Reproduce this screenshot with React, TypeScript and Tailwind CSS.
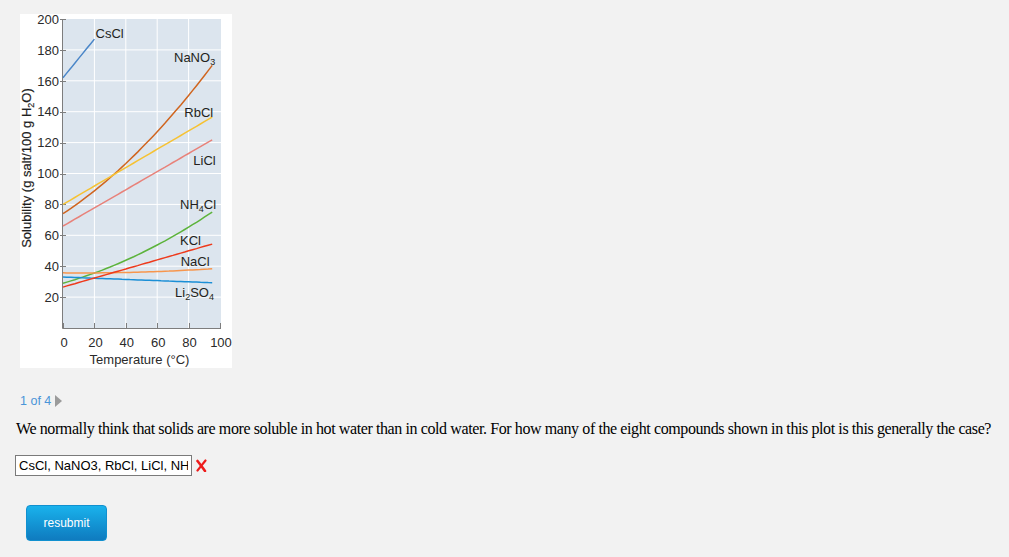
import React from "react";

// plot transform: data (temp, solubility) -> svg coords inside the white figure box
const px = (t: number) => 43 + 1.57 * t;
const py = (s: number) => 314 - 1.545 * s;

function curve(from: number, to: number, f: (t: number) => number) {
    const pts: string[] = [];
    for (let t = from; t <= to + 0.001; t += 2.5) {
        pts.push(`${px(t).toFixed(1)},${py(f(t)).toFixed(1)}`);
    }
    return pts.join(" ");
}

const series = [
    { color: "#4a86c8", from: 0, to: 20, f: (t: number) => 162 + 1.25 * t },
    { color: "#d0651f", from: 0, to: 95, f: (t: number) => 74 + 0.669 * t + 0.00359 * t * t },
    { color: "#f6c233", from: 0, to: 95, f: (t: number) => 80 + 0.595 * t },
    { color: "#e8827a", from: 0, to: 95, f: (t: number) => 66 + 0.587 * t },
    { color: "#5cb33b", from: 0, to: 95, f: (t: number) => 29 + 0.288 * t + 0.00207 * t * t },
    { color: "#f7964d", from: 0, to: 95, f: (t: number) => 35.7 - 0.01 * t + 0.0004 * t * t },
    { color: "#1b8fd6", from: 0, to: 95, f: (t: number) => 33 - 0.039 * t },
    { color: "#ee3a1c", from: 0, to: 95, f: (t: number) => 26.5 + 0.293 * t },
];

function SolubilityChart() {
    const yTicks = [20, 40, 60, 80, 100, 120, 140, 160, 180, 200];
    const xTicks = [0, 20, 40, 60, 80, 100];

    return (
        <svg width="212" height="354" viewBox="0 0 212 354" overflow="visible" fontFamily="'Liberation Sans', Arial, sans-serif">
            {/* plot area */}
            <rect x={43} y={py(200)} width={158} height={309} fill="#dce5ee" />
            {[20, 40, 60, 80].map(t => (
                <line key={t} x1={px(t)} x2={px(t)} y1={py(200)} y2={314} stroke="#ffffff" strokeWidth="1" />
            ))}
            {[20, 40, 60, 80, 100, 120, 140, 160, 180].map(s => (
                <line key={s} x1={43} x2={201} y1={py(s)} y2={py(s)} stroke="#ffffff" strokeWidth="1" />
            ))}

            {/* axes */}
            <line x1={42.5} x2={42.5} y1={py(200)} y2={314.5} stroke="#7d7d7d" strokeWidth="1" />
            <line x1={42.5} x2={201} y1={314.5} y2={314.5} stroke="#7d7d7d" strokeWidth="1" />
            {yTicks.map(s => (
                <line key={s} x1={40} x2={46} y1={Math.round(py(s)) + 0.5} y2={Math.round(py(s)) + 0.5} stroke="#7d7d7d" />
            ))}
            {xTicks.map(t => (
                <line key={t} x1={Math.round(px(t)) + 0.5} x2={Math.round(px(t)) + 0.5} y1={309} y2={314} stroke="#7d7d7d" />
            ))}

            {/* curves */}
            {series.map((c, i) => (
                <polyline key={i} points={curve(c.from, c.to, c.f)} fill="none" stroke={c.color} strokeWidth="1.5" />
            ))}

            {/* tick labels */}
            <g fontSize="13" fill="#2a2a2a">
                {yTicks.map(s => (
                    <text key={s} x={39} y={py(s) + 4.7} textAnchor="end">{s}</text>
                ))}
                {xTicks.map(t => (
                    <text key={t} x={px(t) + 1} y={332.5} textAnchor="middle">{t}</text>
                ))}
                <text x={119.5} y={350} textAnchor="middle">Temperature (°C)</text>
                <text x={11} y={154} textAnchor="middle" transform="rotate(-90 11 154)" fill="#1f1f1f" stroke="#1f1f1f" strokeWidth="0.2">
                    Solubility (g salt/100 g H<tspan fontSize="9" dy="3">2</tspan><tspan dy="-3">O)</tspan>
                </text>
            </g>

            {/* curve labels */}
            <g fontSize="13" fill="#231f20">
                <text x={75.5} y={23.5}>CsCl</text>
                <text x={154} y={48}>NaNO<tspan fontSize="9" dy="3">3</tspan></text>
                <text x={164.3} y={102.5}>RbCl</text>
                <text x={173.3} y={150.7}>LiCl</text>
                <text x={160} y={195.3}>NH<tspan fontSize="9" dy="3">4</tspan><tspan dy="-3">Cl</tspan></text>
                <text x={160} y={231}>KCl</text>
                <text x={160.7} y={251.7}>NaCl</text>
                <text x={155} y={283.3}>Li<tspan fontSize="9" dy="3">2</tspan><tspan dy="-3">SO</tspan><tspan fontSize="9" dy="3">4</tspan></text>
            </g>
        </svg>
    );
}

export default function App() {
    return (
        <div className="min-h-screen w-full bg-[#f2f2f2] flex flex-col items-start">
            {/* Figure */}
            <div className="ml-[20px] mt-[14px] bg-white w-[212px] h-[354px]">
                <SolubilityChart />
            </div>

            {/* Pager */}
            <div className="ml-[20px] mt-[25px] h-[16px] flex items-center gap-[4px] font-['Liberation_Sans',Arial,sans-serif] text-[12.5px] leading-[16px] text-[#4a95d8]">
                <span>1 of 4</span>
                <span className="w-0 h-0 border-y-[6px] border-y-transparent border-l-[7px] border-l-[#9b9b9b]" />
            </div>

            {/* Question */}
            <p className="ml-[16px] mt-[11px] whitespace-nowrap font-['Liberation_Serif','Times_New_Roman',serif] text-[16px] leading-[18px] tracking-[-0.4px] text-black">
                We normally think that solids are more soluble in hot water than in cold water. For how many of the eight compounds shown in this plot is this generally the case?
            </p>

            {/* Answer */}
            <div className="ml-[15px] mt-[17px] flex items-center gap-[4px]">
                <input
                    type="text"
                    readOnly
                    value="CsCl, NaNO3, RbCl, LiCl, NH4Cl, KCl, NaCl"
                    className="w-[177px] h-[21px] bg-white border border-[#7a7a7a] px-[3px] font-['Liberation_Sans',Arial,sans-serif] text-[13px] text-black outline-none"
                />
                <svg width="11" height="13" viewBox="0 0 11 13">
                    <path d="M1.5 2 C4 5 6 8 9 12" stroke="#ee1c1c" strokeWidth="2.6" strokeLinecap="round" fill="none" />
                    <path d="M9.5 1.5 C7 4.5 4.5 8 1.5 11.5" stroke="#ee1c1c" strokeWidth="2.2" strokeLinecap="round" fill="none" />
                </svg>
            </div>

            {/* Resubmit */}
            <button className="ml-[26px] mt-[29px] w-[81px] h-[36px] rounded-[4px] border border-[#1190cf] bg-gradient-to-b from-[#1ab2ec] to-[#0f7bbf] text-white font-['Liberation_Sans',Arial,sans-serif] text-[12px]">
                resubmit
            </button>
        </div>
    );
}
